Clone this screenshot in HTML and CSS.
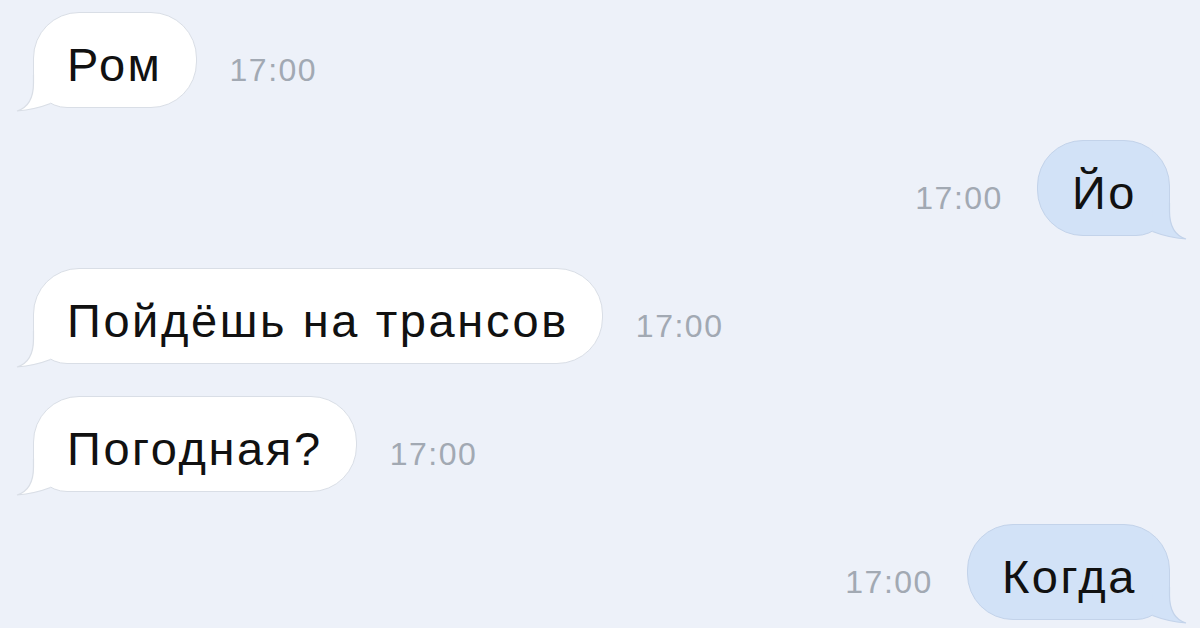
FILE: index.html
```html
<!DOCTYPE html>
<html lang="ru">
<head>
	<meta http-equiv="Content-Type" content="text/html; charset=UTF-8">
	<meta name="viewport" content="width=device-width, initial-scale=1">
	<title>Сообщения</title>
	<link rel="stylesheet" href="styles.css">
</head>
<body>
<main class="chat">
  <div class="row row-in">
    <div class="bubble bubble-in">
      <span class="text">Ром</span>
      <svg class="tail" width="52" height="52" viewBox="0 0 52 52"><path class="tail-fill" d="M18.5,14 L18.5,22 C18.5,38 12,47 2,50 Q20,48.5 35.5,42.5 L36,14 Z"/><path class="tail-line" d="M18.5,14 L18.5,22 C18.5,38 12,47 2,50 Q20,48.5 35.5,42.5"/></svg>
    </div>
    <span class="time">17:00</span>
  </div>

  <div class="row row-out">
    <span class="time">17:00</span>
    <div class="bubble bubble-out">
      <span class="text">Йо</span>
      <svg class="tail" width="52" height="52" viewBox="0 0 52 52"><path class="tail-fill" d="M18.5,14 L18.5,22 C18.5,38 12,47 2,50 Q20,48.5 35.5,42.5 L36,14 Z"/><path class="tail-line" d="M18.5,14 L18.5,22 C18.5,38 12,47 2,50 Q20,48.5 35.5,42.5"/></svg>
    </div>
  </div>

  <div class="row row-in">
    <div class="bubble bubble-in">
      <span class="text">Пойдёшь на трансов</span>
      <svg class="tail" width="52" height="52" viewBox="0 0 52 52"><path class="tail-fill" d="M18.5,14 L18.5,22 C18.5,38 12,47 2,50 Q20,48.5 35.5,42.5 L36,14 Z"/><path class="tail-line" d="M18.5,14 L18.5,22 C18.5,38 12,47 2,50 Q20,48.5 35.5,42.5"/></svg>
    </div>
    <span class="time">17:00</span>
  </div>

  <div class="row row-in">
    <div class="bubble bubble-in">
      <span class="text">Погодная?</span>
      <svg class="tail" width="52" height="52" viewBox="0 0 52 52"><path class="tail-fill" d="M18.5,14 L18.5,22 C18.5,38 12,47 2,50 Q20,48.5 35.5,42.5 L36,14 Z"/><path class="tail-line" d="M18.5,14 L18.5,22 C18.5,38 12,47 2,50 Q20,48.5 35.5,42.5"/></svg>
    </div>
    <span class="time">17:00</span>
  </div>

  <div class="row row-out">
    <span class="time">17:00</span>
    <div class="bubble bubble-out">
      <span class="text">Когда</span>
      <svg class="tail" width="52" height="52" viewBox="0 0 52 52"><path class="tail-fill" d="M18.5,14 L18.5,22 C18.5,38 12,47 2,50 Q20,48.5 35.5,42.5 L36,14 Z"/><path class="tail-line" d="M18.5,14 L18.5,22 C18.5,38 12,47 2,50 Q20,48.5 35.5,42.5"/></svg>
    </div>
  </div>
</main>
</body>
</html>
```

FILE: styles.css
```css
html,
body {
  width: 100%;
  height: 100%;
}
body {
  margin: 0;
  background-color: #edf1f9;
  font-family: "Liberation Sans", Arial, sans-serif;
  overflow: hidden;
}
.chat {
  display: flex;
  flex-direction: column;
  gap: 32px;
  padding: 12px 30px 0 33px;
}
.row {
  display: flex;
  align-items: baseline;
  gap: 33px;
}
.row-out {
  justify-content: flex-end;
  gap: 34px;
}
.bubble {
  position: relative;
  box-sizing: border-box;
  height: 96px;
  display: flex;
  align-items: center;
  padding: 9px 33px 0;
  border: 1px solid #d9dee6;
  border-radius: 46px;
  font-size: 47px;
  letter-spacing: 2.6px;
  color: #111;
}
.bubble-in {
  background-color: #fff;
  border-bottom-left-radius: 34px;
}
.bubble-out {
  background-color: #d2e2f7;
  border-color: #c3d3ea;
  border-bottom-right-radius: 34px;
  padding: 9px 32px 0 34px;
}
.text {
  position: relative;
  z-index: 1;
}
.tail {
  position: absolute;
  bottom: -6px;
  left: -19px;
}
.bubble-out .tail {
  left: auto;
  right: -19px;
  transform: scaleX(-1);
}
.tail-fill {
  fill: #fff;
}
.tail-line {
  fill: none;
  stroke: #d9dee6;
  stroke-width: 1.2;
}
.bubble-out .tail-fill {
  fill: #d2e2f7;
}
.bubble-out .tail-line {
  stroke: #c3d3ea;
}
.time {
  font-size: 32px;
  letter-spacing: 1.5px;
  color: #a2a9b3;
}
```
